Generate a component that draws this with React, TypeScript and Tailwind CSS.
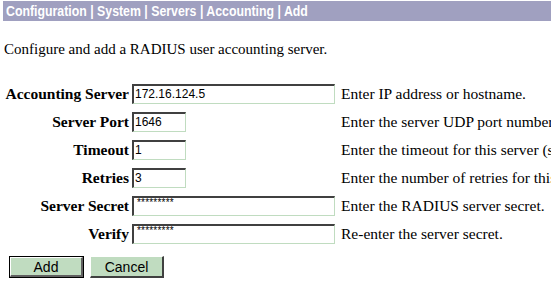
import React from "react";

const rows = [
  { label: "Accounting Server", value: "172.16.124.5", wide: true, desc: "Enter IP address or hostname." },
  { label: "Server Port", value: "1646", wide: false, desc: "Enter the server UDP port number." },
  { label: "Timeout", value: "1", wide: false, desc: "Enter the timeout for this server (seconds)." },
  { label: "Retries", value: "3", wide: false, desc: "Enter the number of retries for this server." },
  { label: "Server Secret", value: "secret", wide: true, desc: "Enter the RADIUS server secret.", pw: true },
  { label: "Verify", value: "secret", wide: true, desc: "Re-enter the server secret.", pw: true },
];

export default function App() {
  return (
    <div className="w-[551px] h-[286px] overflow-hidden bg-white relative" style={{ fontFamily: '"Liberation Serif", serif' }}>
      <div className="pt-[1px] pl-[3px]">
        <div
          className="h-[20px] bg-[#a0a0c0] text-white font-bold text-[14.5px] leading-[20px] pl-[3px] whitespace-nowrap"
          style={{ fontFamily: '"Liberation Sans", Arial, sans-serif' }}
        >
          <span className="inline-block origin-left scale-x-[0.85]">Configuration | System | Servers | Accounting | Add</span>
        </div>
      </div>
      <div className="pl-[4px] mt-[20px] text-[15px] leading-[17px] text-black whitespace-nowrap">
        Configure and add a RADIUS user accounting server.
      </div>
      <div className="mt-[24px] grid grid-cols-[130px_208px_auto] gap-y-[4px] items-center whitespace-nowrap">
        {rows.map((r) => (
          <React.Fragment key={r.label}>
            <div className="text-right pr-[1px] font-bold text-[15.5px] text-black">{r.label}</div>
            <div className="pl-[2px] flex">
              <div
                className={`h-[20px] ${r.wide ? "w-[203px]" : "w-[54px]"} bg-white border-t-2 border-l-2 border-r border-b border-t-[#404040] border-l-[#404040] border-r-[#c0dcc0] border-b-[#c0dcc0] text-[12px] leading-[17px] pl-[1px] text-black overflow-hidden`}
                style={{ fontFamily: '"Liberation Sans", Arial, sans-serif' }}
              >
                {r.pw ? (
                  <span className="block text-[10px] leading-[10px] pl-[2px] tracking-[0.2px]">*********</span>
                ) : (
                  r.value
                )}
              </div>
            </div>
            <div className="text-[15.5px] text-black pl-[3px] leading-[24px]">{r.desc}</div>
          </React.Fragment>
        ))}
      </div>
      <div className="flex gap-[6px] pl-[9px] mt-[10px]" style={{ fontFamily: '"Liberation Sans", Arial, sans-serif' }}>
        <button className="w-[75px] h-[22px] border border-black bg-[#c0dcc0] text-[14px] text-black leading-none p-0">
          <div className="w-full h-full border-t border-l border-t-white border-l-white border-b-2 border-r-2 border-b-[#606060] border-r-[#606060] flex items-center justify-center">
            Add
          </div>
        </button>
        <button className="w-[74px] h-[22px] bg-[#c0dcc0] text-[14px] text-black leading-none p-0 border-t border-l border-t-white border-l-white border-b-2 border-r-2 border-b-[#404040] border-r-[#404040]">
          Cancel
        </button>
      </div>
    </div>
  );
}
